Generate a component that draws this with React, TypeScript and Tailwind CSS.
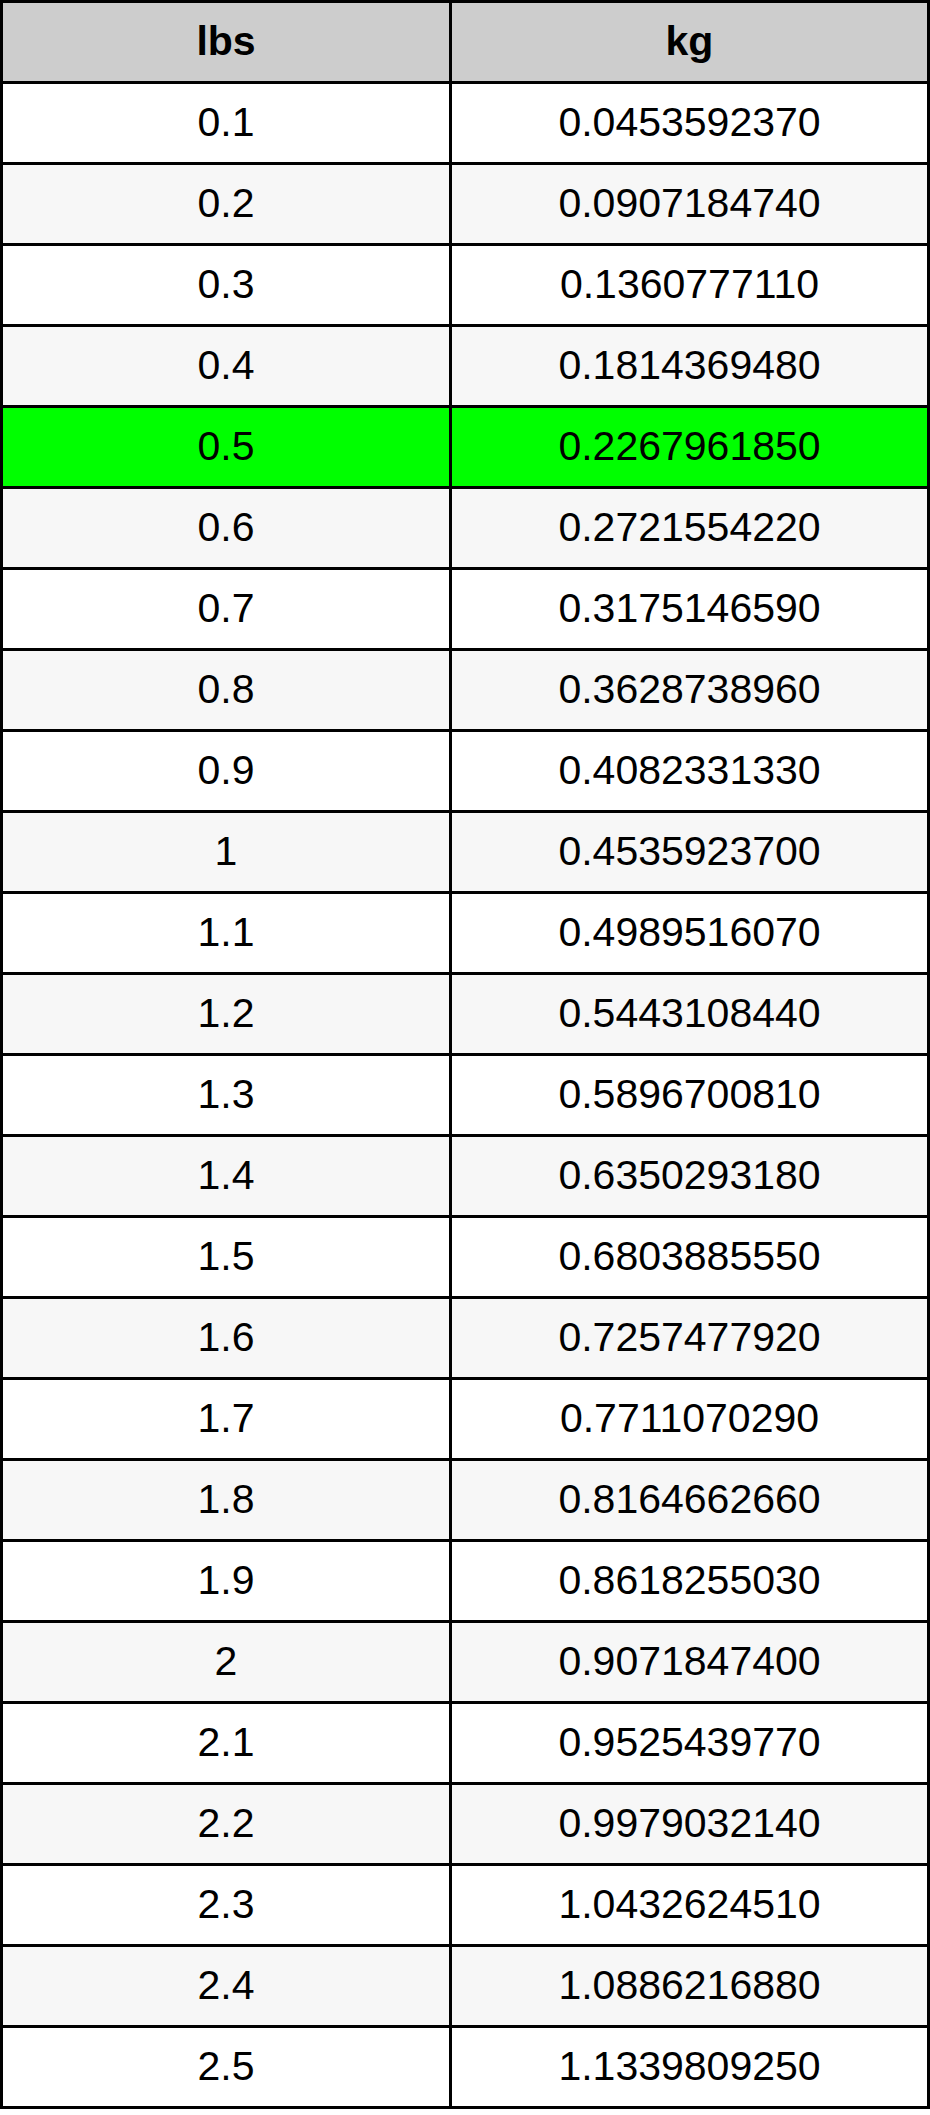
const ROWS: [string, string][] = [
  ["0.1", "0.0453592370"],
  ["0.2", "0.0907184740"],
  ["0.3", "0.1360777110"],
  ["0.4", "0.1814369480"],
  ["0.5", "0.2267961850"],
  ["0.6", "0.2721554220"],
  ["0.7", "0.3175146590"],
  ["0.8", "0.3628738960"],
  ["0.9", "0.4082331330"],
  ["1", "0.4535923700"],
  ["1.1", "0.4989516070"],
  ["1.2", "0.5443108440"],
  ["1.3", "0.5896700810"],
  ["1.4", "0.6350293180"],
  ["1.5", "0.6803885550"],
  ["1.6", "0.7257477920"],
  ["1.7", "0.7711070290"],
  ["1.8", "0.8164662660"],
  ["1.9", "0.8618255030"],
  ["2", "0.9071847400"],
  ["2.1", "0.9525439770"],
  ["2.2", "0.9979032140"],
  ["2.3", "1.0432624510"],
  ["2.4", "1.0886216880"],
  ["2.5", "1.1339809250"],
];

export default function App() {
  return (
    <div className="w-[930px] bg-white font-['Liberation_Sans',Arial,sans-serif] text-[41px] text-black">
      <div className="flex flex-col border-[3px] border-black">
        <div className="flex h-[78px] bg-[#cdcdcd] font-bold">
          <div className="flex w-[449px] items-center justify-center border-r-[3px] border-black">
            lbs
          </div>
          <div className="flex flex-1 items-center justify-center">kg</div>
        </div>
        {ROWS.map(([lbs, kg], i) => {
          const highlight = lbs === "0.5";
          const bg = highlight
            ? "bg-[#00ff00]"
            : i % 2 === 1
              ? "bg-[#f7f7f7]"
              : "bg-white";
          return (
            <div
              key={lbs}
              className={`flex h-[81px] border-t-[3px] border-black ${bg}`}
            >
              <div className="flex w-[449px] items-center justify-center border-r-[3px] border-black">
                {lbs}
              </div>
              <div className="flex flex-1 items-center justify-center">
                {kg}
              </div>
            </div>
          );
        })}
      </div>
    </div>
  );
}
